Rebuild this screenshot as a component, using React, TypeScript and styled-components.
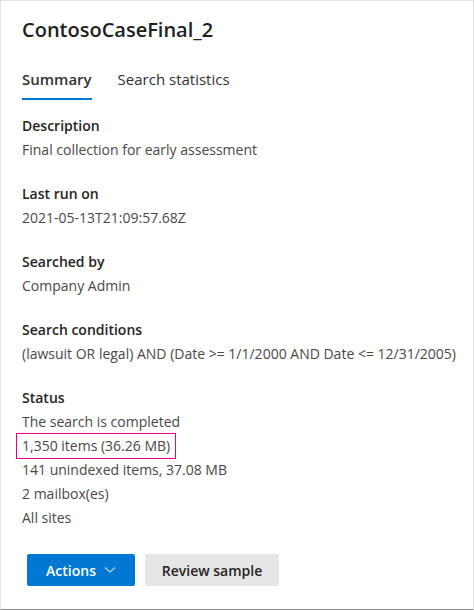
import React from "react";
import styled, { createGlobalStyle } from "styled-components";

const Global = createGlobalStyle`
  html, body { margin: 0; padding: 0; background: #ffffff; }
  * { box-sizing: border-box; }
`;

const Panel = styled.div`
  width: 474px;
  height: 610px;
  border: 1px solid #e3e3e3;
  border-bottom-color: #8a8a8a;
  background: #ffffff;
  padding: 15px 0 0 21px;
  font-family: "Open Sans", "Noto Sans", sans-serif;
  color: #323130;
  display: flex;
  flex-direction: column;
`;

const Title = styled.h1`
  margin: 0;
  font-size: 20px;
  line-height: 28px;
  font-weight: 600;
  color: #201f1e;
`;

const TabList = styled.div`
  display: flex;
  gap: 26px;
  margin-top: 25px;
`;

const Tab = styled.div<{ $active?: boolean }>`
  font-size: 15px;
  line-height: 20px;
  padding-bottom: 9px;
  color: #323130;
  font-weight: ${(p) => (p.$active ? 600 : 400)};
  border-bottom: 2px solid ${(p) => (p.$active ? "#0078d4" : "transparent")};
`;

const Sections = styled.div`
  display: flex;
  flex-direction: column;
  gap: 20px;
  margin-top: 14px;
`;

const Section = styled.div`
  display: flex;
  flex-direction: column;
`;

const Label = styled.div`
  font-size: 14px;
  line-height: 24px;
  font-weight: 600;
  color: #252423;
`;

const Value = styled.div<{ $boxed?: boolean }>`
  font-size: 14px;
  line-height: 24px;
  color: #4a4846;
  align-self: flex-start;
  ${(p) =>
    p.$boxed
      ? `outline: 1.5px solid #e3008c; outline-offset: 0; margin-left: -5px; padding: 0 5px;`
      : ""}
`;

const Buttons = styled.div`
  display: flex;
  gap: 10px;
  margin-top: 24px;
  padding-left: 5px;
`;

const Button = styled.button<{ $primary?: boolean }>`
  height: 32px;
  border: none;
  border-radius: 2px;
  font-family: inherit;
  font-size: 14px;
  font-weight: 600;
  display: flex;
  align-items: center;
  justify-content: center;
  gap: 8px;
  background: ${(p) => (p.$primary ? "#0078d4" : "#e6e6e6")};
  color: ${(p) => (p.$primary ? "#ffffff" : "#252423")};
  width: ${(p) => (p.$primary ? "108px" : "134px")};
  padding: 0;
`;

const Chevron = () => (
  <svg width="12" height="8" viewBox="0 0 12 8" aria-hidden="true">
    <path d="M1 1.5 L6 6 L11 1.5" fill="none" stroke="#b9d4f2" strokeWidth="1.2" />
  </svg>
);

const data: { label: string; values: string[]; boxed?: number }[] = [
  { label: "Description", values: ["Final collection for early assessment"] },
  { label: "Last run on", values: ["2021-05-13T21:09:57.68Z"] },
  { label: "Searched by", values: ["Company Admin"] },
  {
    label: "Search conditions",
    values: ["(lawsuit OR legal) AND (Date >= 1/1/2000 AND Date <= 12/31/2005)"],
  },
  {
    label: "Status",
    values: [
      "The search is completed",
      "1,350 items (36.26 MB)",
      "141 unindexed items, 37.08 MB",
      "2 mailbox(es)",
      "All sites",
    ],
    boxed: 1,
  },
];

export default function App() {
  return (
    <>
      <Global />
      <Panel>
        <Title>ContosoCaseFinal_2</Title>
        <TabList>
          <Tab $active>Summary</Tab>
          <Tab>Search statistics</Tab>
        </TabList>
        <Sections>
          {data.map((s) => (
            <Section key={s.label}>
              <Label>{s.label}</Label>
              {s.values.map((v, i) => (
                <Value key={v} $boxed={s.boxed === i}>
                  {v}
                </Value>
              ))}
            </Section>
          ))}
        </Sections>
        <Buttons>
          <Button $primary>
            Actions
            <Chevron />
          </Button>
          <Button>Review sample</Button>
        </Buttons>
      </Panel>
    </>
  );
}
